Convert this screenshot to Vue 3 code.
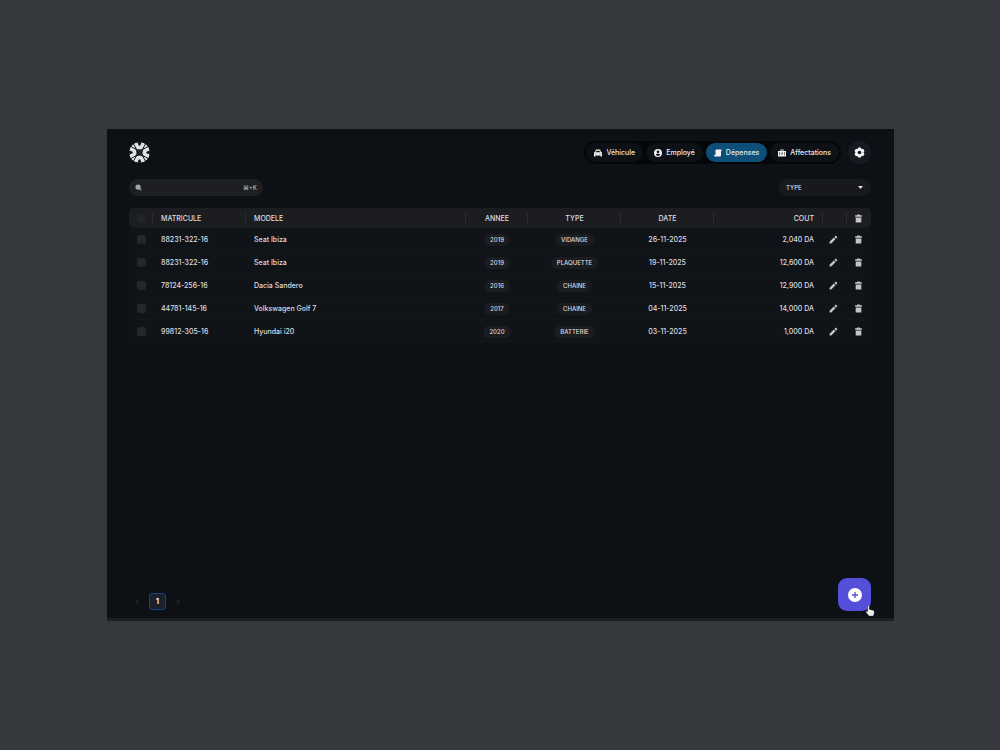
<script setup>
import { ref } from 'vue'

const tabs = [
  { id: 'car', label: 'Véhicule' },
  { id: 'user', label: 'Employé' },
  { id: 'book', label: 'Dépenses' },
  { id: 'case', label: 'Affectations' },
]
const active = ref('book')
const search = ref('')

const icons = {
  car: 'M4 1h8l2 5l2 1v8h-3v-2H3v2H0V7l2-1zM5 3.500L4 6.500h8l-1-3zM3 9v1.500h2V9zM11 9v1.500h2V9z',
  user: 'M8 0a8 8 0 1 0 0 16A8 8 0 0 0 8 0zM8 3a2.700 2.700 0 1 1 0 5.400a2.700 2.700 0 0 1 0-5.400zM3.500 11.500c1-2.500 8-2.500 9 0c-2 3-7 3-9 0z',
  book: 'M4 1h11v3h-1v8c0 2-1 3-2 3H3c-2 0-3-1-3-3h3V3z',
  case: 'M5 1h6v3h5v11H0V4h5zM6.500 2.500V4h3V2.500zM3 6v7h1V6zM12 6v7h1V6zM7 7v4h2V7z',
  trash: 'M6 1h4l1 1h3v3H2V2h3zM3 6h10v9H3z',
  pencil: 'M1 15v-3l7.500-7.500l3 3L4 15zM9.500 3.500L12 1l3 3l-2.500 2.500z',
}

const rows = [
  ['88231-322-16', 'Seat Ibiza', '2019', 'VIDANGE', '26-11-2025', '2,040 DA'],
  ['88231-322-16', 'Seat Ibiza', '2019', 'PLAQUETTE', '19-11-2025', '12,600 DA'],
  ['78124-256-16', 'Dacia Sandero', '2016', 'CHAINE', '15-11-2025', '12,900 DA'],
  ['44781-145-16', 'Volkswagen Golf 7', '2017', 'CHAINE', '04-11-2025', '14,000 DA'],
  ['99812-305-16', 'Hyundai i20', '2020', 'BATTERIE', '03-11-2025', '1,000 DA'],
]
</script>

<template>
  <div class="page">
    <main class="window">
      <header class="top">
        <svg class="logo" viewBox="0 0 42 42" aria-label="Logo">
          <circle cx="21" cy="21" r="21" fill="#dfe1e4" />
          <g v-for="a in [0, 90, 180, 270]" :key="a" :transform="`rotate(${a} 21 21)`">
            <path d="M16.500 -1L19 6Q21 9 23 6L25.500 -1z" fill="#0d1015" />
            <path d="M21 21L12 12Q21 18 30 12z" fill="#0d1015" />
            <path d="M27 15Q33 12 38 9M27 15Q30 9 33 4" fill="none" stroke="#0d1015" stroke-width="2" />
          </g>
        </svg>
        <div class="actions">
          <nav class="tabs">
            <button
              v-for="t in tabs"
              :key="t.id"
              type="button"
              class="tab"
              :class="{ active: active === t.id }"
              @click="active = t.id"
            >
              <svg class="icon" viewBox="0 0 16 16"><path :d="icons[t.id]" /></svg>
              {{ t.label }}
            </button>
          </nav>
          <button type="button" class="gear" aria-label="Paramètres">
            <svg viewBox="0 0 24 24">
              <g fill="#f3f4f6">
                <rect v-for="a in [0, 60, 120]" :key="a" x="8.500" y="1" width="7" height="22" rx="1" :transform="`rotate(${a} 12 12)`" />
                <circle cx="12" cy="12" r="9" />
              </g>
              <circle cx="12" cy="12" r="4" fill="#171a20" />
            </svg>
          </button>
        </div>
      </header>

      <div class="filters">
        <label class="search">
          <svg viewBox="0 0 16 16">
            <circle cx="7" cy="7" r="6" fill="#a4a5a9" />
            <path d="M10 10L14.500 14.500" stroke="#a4a5a9" stroke-width="3" />
          </svg>
          <input v-model="search" type="text" aria-label="Rechercher" />
          <kbd>⌘+K</kbd>
        </label>
        <div class="select">
          <select aria-label="Type">
            <option>TYPE</option>
          </select>
          <svg viewBox="0 0 10 6"><path d="M0 0h10L5 6z" fill="#e4e5e7" /></svg>
        </div>
      </div>

      <table>
        <colgroup>
          <col class="c-check" /><col class="c-mid" /><col /><col class="c-year" />
          <col class="c-mid" /><col class="c-mid" /><col class="c-cost" />
          <col class="c-icon" /><col class="c-icon" />
        </colgroup>
        <thead>
          <tr>
            <th class="center"><input type="checkbox" aria-label="Tout sélectionner" /></th>
            <th>MATRICULE</th>
            <th>MODELE</th>
            <th class="center">ANNEE</th>
            <th class="center">TYPE</th>
            <th class="center">DATE</th>
            <th class="right">COUT</th>
            <th></th>
            <th class="center">
              <button type="button" class="act" aria-label="Supprimer la sélection">
                <svg viewBox="0 0 16 16"><path :d="icons.trash" /></svg>
              </button>
            </th>
          </tr>
        </thead>
        <tbody>
          <tr v-for="(r, i) in rows" :key="i">
            <td class="center"><input type="checkbox" :aria-label="`Sélectionner ${r[0]}`" /></td>
            <td>{{ r[0] }}</td>
            <td>{{ r[1] }}</td>
            <td class="center"><span class="chip">{{ r[2] }}</span></td>
            <td class="center"><span class="chip">{{ r[3] }}</span></td>
            <td class="center">{{ r[4] }}</td>
            <td class="right">{{ r[5] }}</td>
            <td class="center">
              <button type="button" class="act" aria-label="Modifier">
                <svg viewBox="0 0 16 16"><path :d="icons.pencil" /></svg>
              </button>
            </td>
            <td class="center">
              <button type="button" class="act" aria-label="Supprimer">
                <svg viewBox="0 0 16 16"><path :d="icons.trash" /></svg>
              </button>
            </td>
          </tr>
        </tbody>
      </table>

      <footer class="bottom">
        <div class="pager">
          <button type="button" class="arrow" aria-label="Page précédente">
            <svg viewBox="0 0 6 8"><path d="M5 1L1 4L5 7" /></svg>
          </button>
          <button type="button" class="num">1</button>
          <button type="button" class="arrow" aria-label="Page suivante">
            <svg viewBox="0 0 6 8"><path d="M1 1L5 4L1 7" /></svg>
          </button>
        </div>
        <div class="add-wrap">
          <button type="button" class="add" aria-label="Ajouter">
            <svg viewBox="0 0 14 14">
              <circle cx="7" cy="7" r="7" fill="#fff" />
              <path d="M7 4v6M4 7h6" stroke="#544fd8" stroke-width="1.300" />
            </svg>
          </button>
          <svg class="cursor" viewBox="0 0 20 24">
            <path
              d="M5 2.500Q7-.500 8.500 2.500V9L16 10.500Q19 11.500 18.500 15L17 22H8L2 14.500Q1 12 3.500 12L5.500 13.500z"
              fill="#fff"
              stroke="#22242a"
            />
            <path d="M9.500 14v5M12 14v5M14.500 14v5" stroke="#b5b7bd" />
          </svg>
        </div>
      </footer>
    </main>
  </div>
</template>

<style>
body {
  background: #35383c;
}
</style>

<style scoped>
* {
  box-sizing: border-box;
}
.page {
  display: flex;
  min-height: 100vh;
  padding: 129px 106px 129px 107px;
  background: #35383c;
  font-family: Inter, 'Noto Sans', sans-serif;
  font-size: 7px;
  line-height: 10px;
  font-weight: 500;
  color: #dddee0;
}
button,
input,
select {
  margin: 0;
  padding: 0;
  border: 0;
  background: none;
  font: inherit;
  color: inherit;
}
svg {
  display: block;
  flex: none;
}
.window {
  display: flex;
  flex: 1;
  flex-direction: column;
  min-width: 0;
  padding: 12px 23px 7px 22px;
  background: #0d1015;
  border-bottom: 3px solid #1b1e22;
}
.top,
.filters,
.actions,
.bottom,
.pager {
  display: flex;
  align-items: center;
}
.top,
.filters,
.bottom {
  justify-content: space-between;
}
.logo {
  width: 21px;
  height: 21px;
  border-radius: 50%;
}
.actions {
  gap: 7px;
}
.tabs {
  display: flex;
  gap: 3px;
  padding: 2px;
  border-radius: 12px;
  background: #050609;
}
.tab {
  display: flex;
  align-items: center;
  gap: 4px;
  height: 19px;
  padding: 0 8px;
  border-radius: 10px;
  background: #0d1014;
  color: #e8e9eb;
}
.tab.active {
  background: #0e4f79;
}
.icon {
  width: 8px;
  height: 8px;
  fill: #f3f4f6;
  fill-rule: evenodd;
}
.gear {
  display: grid;
  place-items: center;
  width: 23px;
  height: 23px;
  border-radius: 50%;
  background: #171a20;
}
.gear svg {
  width: 11px;
  height: 11px;
}
.filters {
  margin-top: 15px;
}
.search {
  display: flex;
  align-items: center;
  gap: 4px;
  width: 134px;
  height: 17px;
  padding: 0 6px;
  border-radius: 9px;
  background: #1e1f23;
}
.search svg {
  width: 7px;
  height: 7px;
}
.search input {
  flex: 1;
  min-width: 0;
  outline: 0;
}
kbd {
  font: inherit;
  font-size: 6px;
  color: #b5b6b9;
}
.select {
  position: relative;
  width: 92px;
}
.select select {
  display: block;
  width: 100%;
  height: 17px;
  padding: 0 7px;
  appearance: none;
  border-radius: 9px;
  background: #17191d;
  font-size: 6px;
}
.select svg {
  position: absolute;
  top: 7px;
  right: 8px;
  width: 5px;
  height: 3px;
}
table {
  width: 100%;
  margin-top: 12px;
  table-layout: fixed;
  border-collapse: separate;
  border-spacing: 0;
}
.c-check,
.c-icon {
  width: 24px;
}
.c-mid {
  width: 93px;
}
.c-year {
  width: 62px;
}
.c-cost {
  width: 109px;
}
th,
td {
  padding: 1px 8px 0;
  text-align: left;
  vertical-align: middle;
  white-space: nowrap;
}
th {
  height: 20px;
  background: linear-gradient(#2c2d31, #2c2d31) right center / 1px 10px no-repeat #1c1d20;
  font-weight: 500;
}
th:first-child {
  border-radius: 5px 0 0 5px;
}
th:last-child {
  border-radius: 0 5px 5px 0;
  background: #1c1d20;
}
td {
  height: 23px;
  background: #101317;
  border-bottom: 1px solid #13161a;
}
.center {
  padding: 1px 0 0;
  text-align: center;
}
.right {
  padding-right: 9px;
  text-align: right;
}
input[type='checkbox'] {
  display: block;
  width: 9px;
  height: 9px;
  margin: 0 auto;
  appearance: none;
  border-radius: 2px;
  background: #25262a;
}
th input[type='checkbox'] {
  background: #222326;
}
.chip {
  display: inline-block;
  padding: 1px 6px;
  border-radius: 6px;
  background: #1a1c20;
  font-size: 6px;
}
.act {
  display: block;
  width: 9px;
  margin: 0 auto;
}
.act svg {
  width: 9px;
  height: 9px;
  fill: #c3c5c9;
}
td:nth-child(8) {
  padding-right: 3px;
}
th:nth-child(9),
td:nth-child(9) {
  padding-right: 2px;
}
.bottom {
  margin-top: auto;
}
.pager {
  gap: 9px;
  margin-top: 14px;
  padding-left: 5px;
}
.arrow svg {
  width: 6px;
  height: 6px;
  fill: none;
  stroke: #3e4146;
}
.num {
  width: 17px;
  height: 17px;
  border: 1px solid #1c427c;
  border-radius: 3px;
  background: #1c202d;
  font-weight: 700;
  color: #fff;
}
.add-wrap {
  position: relative;
}
.add {
  display: grid;
  place-items: center;
  width: 33px;
  height: 33px;
  border-radius: 9px;
  background: #544fd8;
}
.add svg {
  width: 14px;
  height: 14px;
}
.cursor {
  position: absolute;
  right: -4px;
  bottom: -6px;
  width: 10px;
  height: 12px;
}
</style>
